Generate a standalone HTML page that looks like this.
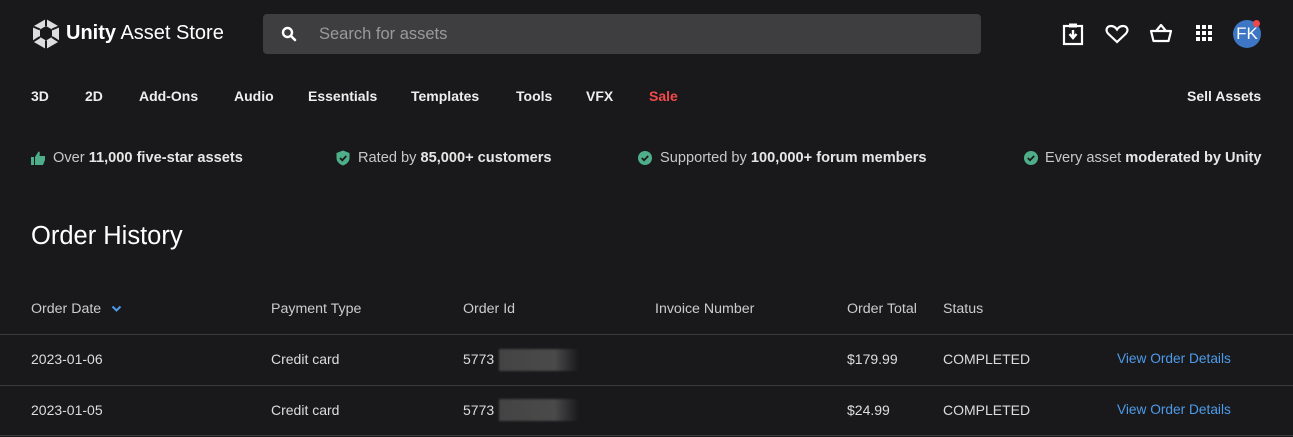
<!DOCTYPE html>
<html><head><meta charset="utf-8"><style>
*{margin:0;padding:0;box-sizing:border-box}
body{width:1293px;height:437px;background:#19191b;font-family:"Liberation Sans",sans-serif;color:#ddd;position:relative;overflow:hidden}
.a{position:absolute;white-space:nowrap}
.nav{font-size:14px;font-weight:bold;color:#eee;top:88px}
.usp{font-size:14.6px;color:#c8c8c8;top:150px}
.usp b{color:#e6e6e6}
.th{font-size:14.2px;color:#ccc;top:301px}
.td{font-size:14px;color:#ddd}
.hr{position:absolute;left:0;width:1293px;height:1px;background:#3a3a3c}
.lnk{color:#4d9bea;font-size:13.7px}
.blur{position:absolute;width:80px;height:22px;background:linear-gradient(90deg,#444 0%,#4a4a4a 70%,#19191b 100%);filter:blur(1px)}
</style></head><body>
<svg class="a" style="left:31px;top:18px" width="30" height="32" viewBox="0 0 30 32"><path d="M15 1 L28 8.5 V23.5 L15 31 L2 23.5 V8.5Z" fill="#ddd"/><path d="M15 8 L21 11.5 V19 L15 22.5 L9 19 V11.5Z" fill="#19191b"/><path d="M15 1 V8 M28 8.5 L21 11.5 M2 8.5 L9 11.5 M15 22.5 V31 M21 19 L28 23.5 M9 19 L2 23.5" stroke="#19191b" stroke-width="2"/></svg>
<div class="a" style="left:66px;top:22px;font-size:20px;color:#fff"><b>Unity</b> Asset Store</div>
<div class="a" style="left:263px;top:14px;width:718px;height:40px;background:#3e3e40;border-radius:4px"></div>
<svg class="a" style="left:281px;top:26px" width="16" height="16" viewBox="0 0 16 16"><circle cx="6.5" cy="6.5" r="4.5" stroke="#fff" stroke-width="2.4" fill="none"/><path d="M10 10 L14 14" stroke="#fff" stroke-width="2.6" stroke-linecap="round"/></svg>
<div class="a" style="left:319px;top:25px;font-size:16.5px;color:#9a9a9a">Search for assets</div>
<svg class="a" style="left:1062px;top:22px" width="22" height="24" viewBox="0 0 22 24"><rect x="2" y="4" width="18" height="18" fill="none" stroke="#fff" stroke-width="2.2"/><rect x="7" y="1.5" width="8" height="4" fill="#fff"/><path d="M11 8 V15 M7.5 12 L11 16 L14.5 12" stroke="#fff" stroke-width="2.4" fill="none"/></svg>
<svg class="a" style="left:1105px;top:24px" width="24" height="20" viewBox="0 0 24 20"><path d="M12 18 L3 9.5 C0 6 2 2 6 2 C9 2 11 4 12 5.5 C13 4 15 2 18 2 C22 2 24 6 21 9.5Z" fill="none" stroke="#fff" stroke-width="2.2"/></svg>
<svg class="a" style="left:1149px;top:22px" width="24" height="22" viewBox="0 0 24 22"><path d="M2 9 H22 L19.5 19 H4.5Z M7 9 L12 3 L17 9" fill="none" stroke="#fff" stroke-width="2.2" stroke-linejoin="round"/></svg>
<svg class="a" style="left:1196px;top:25px" width="18" height="18" viewBox="0 0 18 18" fill="#fff"><rect x="0" y="0" width="4" height="4"/><rect x="6" y="0" width="4" height="4"/><rect x="12" y="0" width="4" height="4"/><rect x="0" y="6" width="4" height="4"/><rect x="6" y="6" width="4" height="4"/><rect x="12" y="6" width="4" height="4"/><rect x="0" y="12" width="4" height="4"/><rect x="6" y="12" width="4" height="4"/><rect x="12" y="12" width="4" height="4"/></svg>
<div class="a" style="left:1233px;top:20px;width:28px;height:28px;border-radius:50%;background:#3d76c4;color:#fff;font-size:17px;text-align:center;line-height:28px">FK</div>
<div class="a" style="left:1253px;top:20px;width:7px;height:7px;border-radius:50%;background:#f0474a"></div>
<div class="a nav" style="left:31px">3D</div>
<div class="a nav" style="left:85px">2D</div>
<div class="a nav" style="left:139px">Add-Ons</div>
<div class="a nav" style="left:234px">Audio</div>
<div class="a nav" style="left:308px">Essentials</div>
<div class="a nav" style="left:411px">Templates</div>
<div class="a nav" style="left:516px">Tools</div>
<div class="a nav" style="left:586px">VFX</div>
<div class="a nav" style="left:649px;color:#f24a4a">Sale</div>
<div class="a nav" style="left:1187px">Sell Assets</div>
<svg class="a" style="left:31px;top:151px" width="15" height="14" viewBox="0 0 15 14" fill="#4fae8a"><rect x="0" y="6" width="3" height="8"/><path d="M4 6 L7.5 0.5 C9 0.5 9 2 8.5 5 H14 V9 L12 14 H4Z"/></svg>
<div class="a usp" style="left:53px">Over <b>11,000 five-star assets</b></div>
<svg class="a" style="left:336px;top:150px" width="14" height="16" viewBox="0 0 14 16"><path d="M7 0.5 L13.5 3 V8 C13.5 12 10 14.5 7 15.5 C4 14.5 0.5 12 0.5 8 V3Z" fill="#4fae8a"/><path d="M4 8 L6.3 10.3 L10.3 6" stroke="#19191b" stroke-width="1.8" fill="none"/></svg>
<div class="a usp" style="left:358px">Rated by <b>85,000+ customers</b></div>
<svg class="a" style="left:638px;top:151px" width="14" height="14" viewBox="0 0 14 14"><circle cx="7" cy="7" r="7" fill="#4fae8a"/><path d="M3.8 7 L6 9.2 L10.2 5" stroke="#19191b" stroke-width="1.8" fill="none"/></svg>
<div class="a usp" style="left:660px">Supported by <b>100,000+ forum members</b></div>
<svg class="a" style="left:1024px;top:151px" width="14" height="14" viewBox="0 0 14 14"><circle cx="7" cy="7" r="7" fill="#4fae8a"/><path d="M3.8 7 L6 9.2 L10.2 5" stroke="#19191b" stroke-width="1.8" fill="none"/></svg>
<div class="a usp" style="left:1045px">Every asset <b>moderated by Unity</b></div>
<div class="a" style="left:31px;top:222px;font-size:25.5px;color:#fff">Order History</div>
<div class="a th" style="left:31px">Order Date</div>
<svg class="a" style="left:111px;top:305px" width="11" height="8" viewBox="0 0 11 8"><path d="M1.5 1.5 L5.5 5.5 L9.5 1.5" stroke="#4d9bea" stroke-width="2" fill="none"/></svg>
<div class="a th" style="left:271px">Payment Type</div>
<div class="a th" style="left:463px">Order Id</div>
<div class="a th" style="left:655px">Invoice Number</div>
<div class="a th" style="left:847px">Order Total</div>
<div class="a th" style="left:943px">Status</div>
<div class="hr" style="top:334px"></div>
<div class="a td" style="left:31px;top:351px">2023-01-06</div>
<div class="a td" style="left:271px;top:351px">Credit card</div>
<div class="a td" style="left:463px;top:351px">5773</div>
<div class="blur" style="left:499px;top:349px"></div>
<div class="a td" style="left:847px;top:351px">$179.99</div>
<div class="a td" style="left:943px;top:351px">COMPLETED</div>
<div class="a lnk" style="left:1117px;top:351px">View Order Details</div>
<div class="hr" style="top:385px"></div>
<div class="a td" style="left:31px;top:402px">2023-01-05</div>
<div class="a td" style="left:271px;top:402px">Credit card</div>
<div class="a td" style="left:463px;top:402px">5773</div>
<div class="blur" style="left:499px;top:399px"></div>
<div class="a td" style="left:847px;top:402px">$24.99</div>
<div class="a td" style="left:943px;top:402px">COMPLETED</div>
<div class="a lnk" style="left:1117px;top:402px">View Order Details</div>
<div class="hr" style="top:435px"></div>
</body></html>
